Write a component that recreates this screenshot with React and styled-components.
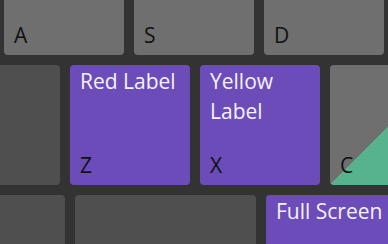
import styled, { createGlobalStyle } from "styled-components";

const GlobalStyle = createGlobalStyle`
    html, body {
        margin: 0;
        padding: 0;
        background: #333333;
        overflow: hidden;
    }
    body {
        width: 388px;
        height: 244px;
        font-family: "Open Sans", "DejaVu Sans", sans-serif;
    }
`

const Keyboard = styled.div`
    display: flex;
    flex-direction: column;
    gap: 10px;
    margin-top: -65px;
    width: 388px;
`

const Row = styled.div`
    display: flex;
    flex-direction: row;
    gap: 10px;
    margin-left: ${(p) => p.$offset}px;
`

const colors = {
    light: "#6f6f6f",
    dark: "#4f4f4f",
    purple: "#6c4cb9",
}

const Key = styled.div`
    position: relative;
    flex-shrink: 0;
    box-sizing: border-box;
    width: ${(p) => p.$w || 120}px;
    height: 120px;
    border-radius: 4px;
    background: ${(p) =>
        p.$split
            ? `linear-gradient(135deg, ${colors.light} 50%, #56b38e 50%)`
            : colors[p.$tone || "light"]};
    padding: 1px 10px 5px 10px;
    display: flex;
    flex-direction: column;
    justify-content: space-between;
    font-size: 21px;
    line-height: 30px;
`

const Label = styled.div`
    color: #f4f2fa;
    font-weight: 500;
`

const Letter = styled.div`
    color: #111111;
    margin-top: auto;
`

const App = () => {
    return (
        <>
            <GlobalStyle/>
            <Keyboard>
                <Row $offset={4}>
                    <Key><Letter>A</Letter></Key>
                    <Key><Letter>S</Letter></Key>
                    <Key><Letter>D</Letter></Key>
                </Row>
                <Row $offset={-60}>
                    <Key $tone="dark"/>
                    <Key $tone="purple">
                        <Label>Red Label</Label>
                        <Letter>Z</Letter>
                    </Key>
                    <Key $tone="purple">
                        <Label>Yellow<br/>Label</Label>
                        <Letter>X</Letter>
                    </Key>
                    <Key $split><Letter>C</Letter></Key>
                </Row>
                <Row $offset={-55}>
                    <Key $tone="dark"/>
                    <Key $tone="dark" $w={181}/>
                    <Key $tone="purple" $w={180}>
                        <Label>Full Screen</Label>
                    </Key>
                </Row>
            </Keyboard>
        </>
    )
}

export default App
